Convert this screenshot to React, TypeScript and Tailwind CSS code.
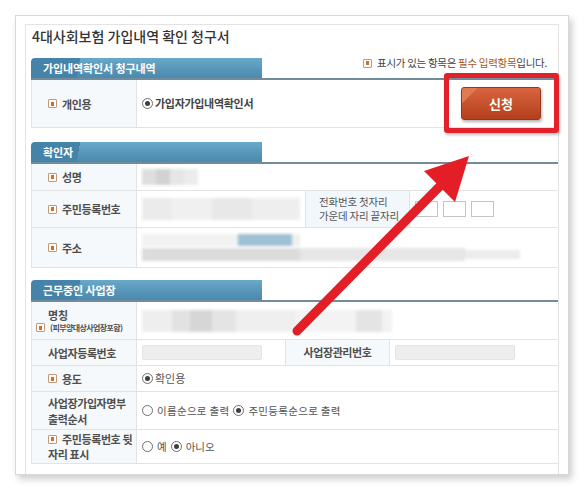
import React from 'react';

const Req = () => (
  <span className="inline-flex items-center justify-center w-[9px] h-[9px] border border-[#c49a76] bg-[#fffdf8] rounded-[1px] mr-[5px] shrink-0">
    <span className="block w-[3px] h-[4px] bg-[#c4703f]" />
  </span>
);

const Radio = ({ on }: { on?: boolean }) => (
  <span className="inline-flex items-center justify-center w-[11px] h-[11px] rounded-full border border-[#6f6f6f] bg-white mr-[2px] shrink-0">
    {on && <span className="block w-[5px] h-[5px] rounded-full bg-[#3f3f3f]" />}
  </span>
);

const SectionHead = ({ title, children }: { title: string; children?: React.ReactNode }) => (
  <div className="flex border-b-2 border-[#718c9c]">
    <div className="w-[231px] h-[20px] rounded-tl-[4px] bg-[image:linear-gradient(100deg,#4583a8_0,#4583a8_21%,transparent_21%),linear-gradient(#6aa8c9,#4b89ad)] text-white font-bold text-[11px] leading-[20px] pl-[12px] tracking-[-0.1px]">
      {title}
    </div>
    {children}
  </div>
);

const Label = ({ children, req }: { children: React.ReactNode; req?: boolean }) => (
  <div className="w-[105px] shrink-0 border-r border-[#e3e3e3] bg-[#f6f9fc] flex items-center pl-[16px] text-[11px] font-bold text-[#4f4f4f] tracking-[-0.4px] leading-[16px]">
    {req && <Req />}
    <div>{children}</div>
  </div>
);

const Row = ({ h, children }: { h: string; children: React.ReactNode }) => (
  <div className={`flex border-b border-[#e3e3e3] ${h}`}>{children}</div>
);

const Blob = ({ w, c }: { w: string; c: string }) => <div className={`${w} h-full ${c}`} />;

export default function App() {
  return (
    <div className="relative w-[584px] h-[490px] bg-white overflow-hidden font-['Noto_Sans_CJK_KR','Noto_Sans',sans-serif]">
      <div className="ml-[15px] mt-[15px] w-[554px] h-[460px] border border-[#d8d8d8] bg-white shadow-[3px_4px_7px_rgba(0,0,0,0.2)]">
        <div className="ml-[9px] mt-[8px] w-[534px] h-[450px] border border-b-0 border-[#e3e3e3] pl-[5px]">
          <div className="mt-[2px] pl-[1px] text-[14px] leading-[18px] font-medium text-[#333]">
            4대사회보험 가입내역 확인 청구서
          </div>

          <div className="mt-[13px]">
            <SectionHead title="가입내역확인서 청구내역">
              <div className="ml-auto mr-[11px] self-start -mt-[1px] flex items-center text-[10.5px] leading-[12px] text-[#444] tracking-[-0.3px]">
                <Req />
                <span>
                  표시가 있는 항목은 <span className="text-[#a85a2a]">필수 입력항목</span>입니다.
                </span>
              </div>
            </SectionHead>
            <div className="border-l border-[#e3e3e3]">
              <Row h="h-[48px]">
                <Label req>개인용</Label>
                <div className="flex-1 flex items-center pl-[5px]">
                  <Radio on />
                  <span className="text-[11px] font-bold text-[#444] tracking-[-0.3px]">가입자가입내역확인서</span>
                  <button className="ml-auto mr-[17px] w-[80px] h-[33px] rounded-[3px] border border-[#93381b] bg-[image:linear-gradient(135deg,#e07a52_0,#e07a52_14%,transparent_14%),linear-gradient(#d8653e,#b43f1e)] text-white text-[13px] font-bold shadow-[1px_2px_3px_rgba(0,0,0,0.3)]">
                    신청
                  </button>
                </div>
              </Row>
            </div>
          </div>

          <div className="mt-[14px]">
            <SectionHead title="확인자" />
            <div className="border-l border-[#e3e3e3]">
              <Row h="h-[27px]">
                <Label req>성명</Label>
                <div className="flex-1 flex items-center pl-[5px]">
                  <div className="flex h-[16px] blur-[1.5px]">
                    <Blob w="w-[14px]" c="bg-[#dedede]" />
                    <Blob w="w-[14px]" c="bg-[#d2d2d2]" />
                    <Blob w="w-[14px]" c="bg-[#e6e6e6]" />
                    <Blob w="w-[14px]" c="bg-[#ececec]" />
                  </div>
                </div>
              </Row>
              <Row h="h-[37px]">
                <Label req>주민등록번호</Label>
                <div className="flex-1 flex items-stretch pl-[5px]">
                  <div className="w-[158px] flex items-center">
                    <div className="flex h-[22px] w-full blur-[1.5px]">
                      <Blob w="w-[30px]" c="bg-[#ebebeb]" />
                      <Blob w="w-[40px]" c="bg-[#f0f0f0]" />
                      <Blob w="w-[40px]" c="bg-[#e8e8e8]" />
                      <Blob w="w-[48px]" c="bg-[#eeeeee]" />
                    </div>
                  </div>
                  <div className="ml-[5px] w-[105px] border-l border-r border-[#e3e3e3] bg-[#f2f7fb] flex flex-col justify-center pl-[13px] text-[10.5px] leading-[14px] text-[#555] tracking-[-0.2px]">
                    <div>전화번호 첫자리</div>
                    <div>가운데 자리 끝자리</div>
                  </div>
                  <div className="ml-[5px] flex items-center gap-[5px]">
                    <div className="w-[23px] h-[16px] border border-[#c4c4c4]" />
                    <div className="w-[23px] h-[16px] border border-[#c4c4c4]" />
                    <div className="w-[23px] h-[16px] border border-[#c4c4c4]" />
                  </div>
                </div>
              </Row>
              <Row h="h-[40px]">
                <Label req>주소</Label>
                <div className="flex-1 flex flex-col justify-center pl-[5px] gap-[2px]">
                  <div className="flex h-[12px] blur-[1.5px]">
                    <Blob w="w-[96px]" c="bg-[#f2f2f2]" />
                    <Blob w="w-[54px]" c="bg-[#9fbfd2]" />
                    <Blob w="w-[8px]" c="bg-[#f0f0f0]" />
                  </div>
                  <div className="flex h-[13px] blur-[1.5px] items-center">
                    <Blob w="w-[158px]" c="bg-[#dcdcdc]" />
                    <Blob w="w-[165px]" c="bg-[#e6e6e6]" />
                    <div className="w-[55px] h-[9px] bg-[#ececec]" />
                  </div>
                </div>
              </Row>
            </div>
          </div>

          <div className="mt-[12px]">
            <SectionHead title="근무중인 사업장" />
            <div className="border-l border-[#e3e3e3]">
              <Row h="h-[38px]">
                <div className="w-[105px] shrink-0 border-r border-[#e3e3e3] bg-[#f6f9fc] flex flex-col justify-center pl-[4px] text-[#4f4f4f] font-bold">
                  <div className="pl-[12px] text-[11px] leading-[14px]">명칭</div>
                  <div className="flex items-center text-[8px] leading-[12px] tracking-[-0.6px]">
                    <Req />
                    (피부양대상사업장포함)
                  </div>
                </div>
                <div className="flex-1 flex items-center pl-[5px]">
                  <div className="flex h-[22px] blur-[1.5px]">
                    <Blob w="w-[30px]" c="bg-[#eeeeee]" />
                    <Blob w="w-[18px]" c="bg-[#e2e2e2]" />
                    <Blob w="w-[22px]" c="bg-[#d6d6d6]" />
                    <Blob w="w-[24px]" c="bg-[#e4e4e4]" />
                    <Blob w="w-[60px]" c="bg-[#efefef]" />
                    <Blob w="w-[60px]" c="bg-[#f3f3f3]" />
                    <Blob w="w-[26px]" c="bg-[#e4e4e4]" />
                    <Blob w="w-[10px]" c="bg-[#f2f2f2]" />
                  </div>
                </div>
              </Row>
              <Row h="h-[26px]">
                <Label>사업자등록번호</Label>
                <div className="flex-1 flex items-stretch pl-[5px]">
                  <div className="flex items-center">
                    <div className="w-[120px] h-[15px] rounded-[2px] bg-[#eeeeee] border border-[#e4e4e4]" />
                  </div>
                  <div className="ml-[23px] w-[105px] border-l border-r border-[#e3e3e3] bg-[#f6f9fc] flex items-center justify-center text-[11px] font-bold text-[#4f4f4f] tracking-[-0.4px]">
                    사업장관리번호
                  </div>
                  <div className="ml-[5px] flex items-center">
                    <div className="w-[120px] h-[15px] rounded-[2px] bg-[#eeeeee] border border-[#e4e4e4]" />
                  </div>
                </div>
              </Row>
              <Row h="h-[26px]">
                <Label req>용도</Label>
                <div className="flex-1 flex items-center pl-[5px] text-[11px] text-[#555]">
                  <Radio on />
                  확인용
                </div>
              </Row>
              <Row h="h-[38px]">
                <Label>
                  사업장가입자명부
                  <br />
                  출력순서
                </Label>
                <div className="flex-1 flex items-center pl-[5px] text-[10.5px] text-[#555] tracking-[0.3px]">
                  <Radio />
                  <span className="ml-[2px] mr-[4px]">이름순으로 출력</span>
                  <Radio on />
                  <span className="ml-[2px]">주민등록순으로 출력</span>
                </div>
              </Row>
              <Row h="h-[34px]">
                <div className="w-[105px] shrink-0 border-r border-[#e3e3e3] bg-[#f6f9fc] flex flex-col justify-center pl-[16px] text-[11px] font-bold text-[#4f4f4f] tracking-[-0.4px] leading-[15px]">
                  <div className="flex items-center">
                    <Req />
                    주민등록번호 뒷
                  </div>
                  <div>자리 표시</div>
                </div>
                <div className="flex-1 flex items-center pl-[5px] text-[10.5px] text-[#555]">
                  <Radio />
                  <span className="ml-[2px] mr-[4px]">예</span>
                  <Radio on />
                  <span className="ml-[2px]">아니오</span>
                </div>
              </Row>
            </div>
          </div>
        </div>
      </div>

      <div className="absolute left-[444px] top-[73px] w-[115px] h-[60px] border-[5px] border-[#e3212a] rounded-[3px] shadow-[1px_2px_3px_rgba(0,0,0,0.25)]" />

      <svg className="absolute left-0 top-0 pointer-events-none" width="584" height="490" viewBox="0 0 584 490">
        <line x1="297" y1="331" x2="445" y2="181" stroke="#e31e26" strokeWidth="9" strokeLinecap="round" />
        <polygon points="469,156 424,171 455,202" fill="#e31e26" />
      </svg>
    </div>
  );
}
